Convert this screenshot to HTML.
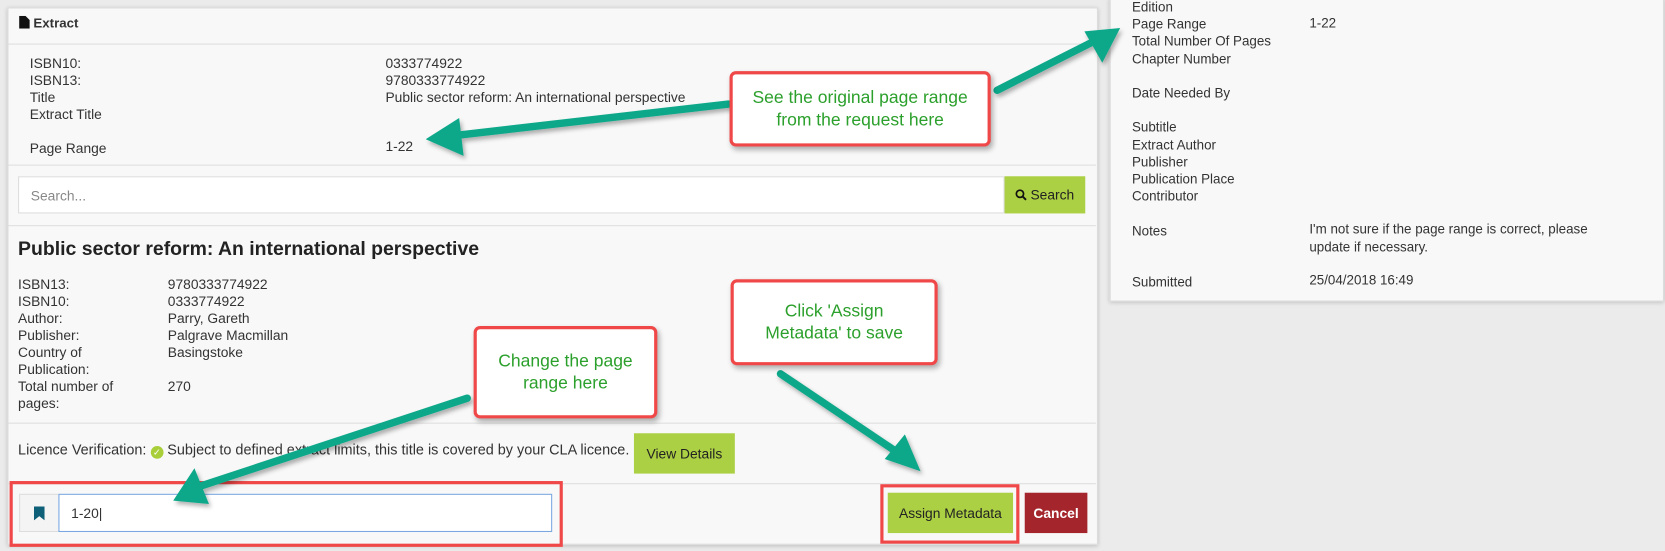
<!DOCTYPE html>
<html><head><meta charset="utf-8"><style>
html,body{margin:0;padding:0;width:1665px;height:551px;overflow:hidden;background:#ebebeb;}
#w{position:absolute;left:0;top:0;width:1568px;height:519px;transform:scale(1.0619);transform-origin:0 0;font-family:"Liberation Sans",sans-serif;color:#333;font-size:13px;}
.a{position:absolute;white-space:nowrap;}
.panel{position:absolute;background:#f8f8f8;border:1px solid #dcdcdc;box-shadow:0 1px 4px rgba(0,0,0,.2);}
.hr{position:absolute;height:1px;background:#dedede;}
.co{position:absolute;background:#fff;border:3px solid #f04848;border-radius:6px;box-shadow:2px 3px 5px rgba(0,0,0,.3);color:#2ca02c;font-size:16.5px;text-align:center;display:flex;align-items:center;justify-content:center;line-height:21px;box-sizing:border-box;}
.hl{position:absolute;border:3px solid #f04848;box-sizing:border-box;}
</style></head><body><div id="w">
<div class="panel" style="left:7px;top:7px;width:1025px;height:504px;"></div>
<div class="a" style="left:18px;top:15px;font-weight:bold;font-size:12.5px;"><svg width="10" height="12" viewBox="0 0 10 12" style="vertical-align:-1px"><path d="M0 0H6L10 4V12H0Z" fill="#111"/></svg> Extract</div>
<div class="hr" style="left:8px;top:41px;width:1024px;"></div>
<div class="a" style="left:28px;top:52px;line-height:16px;">ISBN10:<br>ISBN13:<br>Title<br>Extract Title<br><br>Page Range</div>
<div class="a" style="left:363px;top:52px;line-height:16px;">0333774922<br>9780333774922<br>Public sector reform: An international perspective<br><br><br><span style="position:relative;top:-2px">1-22</span></div>
<div class="hr" style="left:8px;top:155px;width:1024px;"></div>
<div class="a" style="left:17px;top:166px;width:929px;height:35px;background:#fff;border:1px solid #ddd;box-sizing:border-box;"></div>
<div class="a" style="left:29px;top:177px;color:#888;">Search...</div>
<div class="a" style="left:946px;top:166px;width:76px;height:35px;background:#acd043;display:flex;align-items:center;justify-content:center;color:#222;"><svg width="11" height="11" viewBox="0 0 11 11" style="margin-right:3px"><circle cx="4.5" cy="4.5" r="3.4" fill="none" stroke="#111" stroke-width="1.6"/><path d="M7 7L10.2 10.2" stroke="#111" stroke-width="1.8"/></svg>Search</div>
<div class="hr" style="left:8px;top:212px;width:1024px;"></div>
<div class="a" style="left:17px;top:223px;font-size:18.3px;font-weight:bold;color:#222;">Public sector reform: An international perspective</div>
<div class="a" style="left:17px;top:260px;line-height:16px;">ISBN13:<br>ISBN10:<br>Author:<br>Publisher:<br>Country of<br>Publication:<br>Total number of<br>pages:</div>
<div class="a" style="left:158px;top:260px;line-height:16px;">9780333774922<br>0333774922<br>Parry, Gareth<br>Palgrave Macmillan<br>Basingstoke<br><br>270</div>
<div class="hr" style="left:8px;top:398px;width:1024px;"></div>
<div class="a" style="left:17px;top:416px;font-size:13.6px;">Licence Verification: <span style="display:inline-block;width:12px;height:12px;border-radius:50%;background:#a8cf3a;color:#fff;font-size:9px;line-height:12px;text-align:center;vertical-align:-1px">✓</span> Subject to defined extract limits, this title is covered by your CLA licence.</div>
<div class="a" style="left:597px;top:408px;width:95px;height:38px;background:#acd043;display:flex;align-items:center;justify-content:center;color:#222;">View Details</div>
<div class="hr" style="left:8px;top:455px;width:1024px;"></div>
<div class="a" style="left:18px;top:465px;width:38px;height:36px;background:#f4f4f4;border:1px solid #ddd;box-sizing:border-box;"><svg width="10" height="13" viewBox="0 0 10 13" style="position:absolute;left:13px;top:11px"><path d="M0 0H10V13L5 9L0 13Z" fill="#0e5f78"/></svg></div>
<div class="a" style="left:55px;top:465px;width:465px;height:36px;background:#fff;border:1px solid #7aa7e0;box-sizing:border-box;"></div>
<div class="a" style="left:67px;top:476px;">1-20|</div>
<div class="a" style="left:836px;top:464px;width:118px;height:38px;background:#acd043;display:flex;align-items:center;justify-content:center;color:#222;">Assign Metadata</div>
<div class="a" style="left:965px;top:464px;width:59px;height:38px;background:#a4262c;display:flex;align-items:center;justify-content:center;color:#fff;font-weight:bold;">Cancel</div>
<div class="hl" style="left:9px;top:453px;width:521px;height:62px;"></div>
<div class="hl" style="left:829px;top:456px;width:131px;height:56px;"></div>
<div class="panel" style="left:1045px;top:-2px;width:520px;height:284px;"></div>
<div class="a" style="left:1066px;top:-1px;line-height:16.2px;font-size:12.6px;">Edition<br>Page Range<br>Total Number Of Pages<br>Chapter Number<br><br>Date Needed By<br><br>Subtitle<br>Extract Author<br>Publisher<br>Publication Place<br>Contributor<br><br>Notes<br><br><br>Submitted</div>
<div class="a" style="left:1233px;top:15px;font-size:12.6px;">1-22</div>
<div class="a" style="left:1233px;top:208px;line-height:17px;font-size:12.6px;">I'm not sure if the page range is correct, please<br>update if necessary.</div>
<div class="a" style="left:1233px;top:257px;font-size:12.6px;">25/04/2018 16:49</div>
<svg class="a" style="left:0;top:0" width="1568" height="519">
<defs><filter id="s"><feDropShadow dx="2" dy="3" stdDeviation="2" flood-opacity=".3"/></filter></defs>
<g fill="#0aa88a" stroke="#0aa88a" stroke-width="7" stroke-linecap="round" filter="url(#s)">
<line x1="686" y1="98" x2="425" y2="128"/><polygon stroke-width="1" points="402,131 432,112 436,146"/>
<line x1="939" y1="85" x2="1032" y2="38"/><polygon stroke-width="1" points="1054,27 1022,30 1038,58"/>
<line x1="440" y1="375" x2="185" y2="459"/><polygon stroke-width="1" points="164,471 183,442 196,474"/>
<line x1="735" y1="352" x2="848" y2="428"/><polygon stroke-width="1" points="866,443 834,432 852,410"/>
</g></svg>
<div class="co" style="left:687px;top:67px;width:246px;height:71px;">See the original page range<br>from the request here</div>
<div class="co" style="left:688px;top:263px;width:195px;height:81px;">Click 'Assign<br>Metadata' to save</div>
<div class="co" style="left:446px;top:307px;width:173px;height:87px;">Change the page<br>range here</div>
</div></body></html>
